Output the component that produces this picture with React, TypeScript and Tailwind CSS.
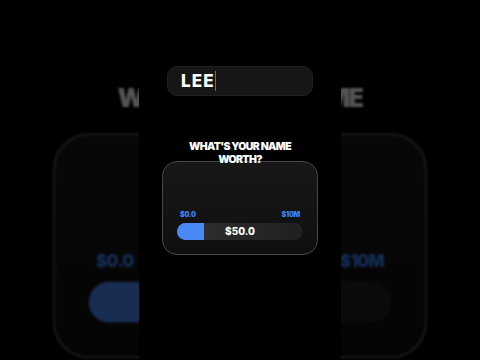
import React from 'react';

const Panel: React.FC<{ className?: string }> = ({ className = '' }) => {
  return (
    <div className={`w-[202px] h-[360px] flex flex-col items-center pt-[66px] font-['Inter',sans-serif] ${className}`}>
      {/* name input */}
      <div className="w-[146px] h-[30px] rounded-[10px] bg-[#161616] border border-[#202020] flex items-center px-[13px]">
        <span className="text-[17px] leading-none font-extrabold text-white tracking-[0.07em]">LEE</span>
        <span className="w-[1.5px] h-[20px] bg-[#3a6fdc]" />
      </div>

      <h1 className="relative z-10 mt-[44px] text-center text-[10.5px] leading-[13px] font-black text-white tracking-[-0.06em]">
        WHAT&apos;S YOUR NAME
        <br />
        WORTH?
      </h1>

      {/* worth card */}
      <div className="-mt-[5px] w-[156px] h-[94px] rounded-[15px] border-[1.5px] border-[#474747] bg-gradient-to-b from-[#181818] to-[#0f0f0f] flex flex-col justify-end px-[14px] pb-[14px]">
        <div className="flex justify-between px-[3px] text-[7px] leading-[8px] font-black text-[#3b82f6] tracking-[-0.04em]">
          <span>$0.0</span>
          <span>$10M</span>
        </div>
        <div className="relative mt-[4px] h-[17px] rounded-full bg-gradient-to-r from-[#303030] to-[#202020] overflow-hidden">
          <div className="w-[27px] h-full bg-[#4a88f5]" />
          <span className="absolute inset-0 flex items-center justify-center text-[10px] font-extrabold text-white">
            $50.0
          </span>
        </div>
      </div>
    </div>
  );
};

export default function App() {
  return (
    <div className="relative w-[480px] h-[360px] bg-black overflow-hidden">
      {/* blurred zoomed backdrop */}
      <div className="absolute inset-0 flex justify-center" aria-hidden="true">
        <Panel className="scale-[2.4] origin-[101px_181px] opacity-[0.33] blur-[0.35px]" />
      </div>
      <div className="relative w-[202px] h-full mx-auto bg-black">
        <Panel />
      </div>
    </div>
  );
}
